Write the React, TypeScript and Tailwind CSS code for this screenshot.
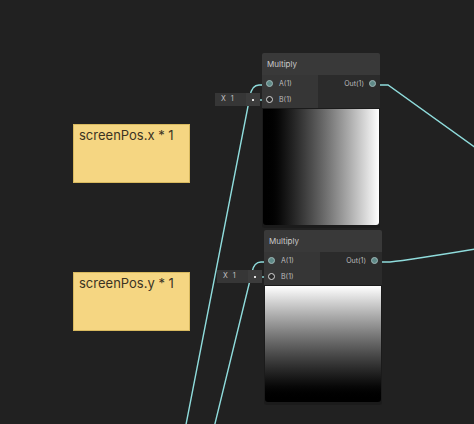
import React from 'react';

const font = { fontFamily: 'Inter, "Noto Sans", sans-serif' };

interface NodeProps {
    left: number;
    top: number;
    vertical?: boolean;
}

const Port: React.FC<{ filled?: boolean }> = ({ filled }) => (
    <span
        className={`w-[7px] h-[7px] rounded-full border ${filled ? 'border-[#9fb8b8] bg-[#5f8a88]' : 'border-[#d8d8d8] bg-[#2a2a2a]'}`}
    />
);

const MultiplyNode: React.FC<NodeProps> = ({ left, top, vertical }) => (
    <div className="absolute w-[118px] flex flex-col" style={{ left, top }}>
        <div className="h-[22px] bg-[#393939] flex items-center px-[5px] text-[8px] text-[#c9c9c9] rounded-t-[2px]">
            Multiply
        </div>
        <div className="h-[33px] flex">
            <div className="w-[56px] bg-[#363636] flex flex-col pt-[5px] gap-[9px] pl-[4px]">
                <div className="flex items-center gap-[6px] text-[7px] text-[#bdbdbd] leading-none">
                    <Port filled />
                    A(1)
                </div>
                <div className="flex items-center gap-[6px] text-[7px] text-[#bdbdbd] leading-none">
                    <Port />
                    B(1)
                </div>
            </div>
            <div className="flex-1 bg-[#2b2b2b] flex justify-end items-start pt-[5px] pr-[4px]">
                <div className="flex items-center gap-[5px] text-[7px] text-[#bdbdbd] leading-none">
                    Out(1)
                    <Port filled />
                </div>
            </div>
        </div>
        <div className="bg-[#1b1b1b] p-[1px] pb-[3px] rounded-b-[3px]">
            <div
                className={`h-[116px] rounded-b-[3px] ${vertical ? 'bg-gradient-to-b from-[#ffffff] to-[#000000]' : 'bg-gradient-to-r from-[#000000] to-[#ffffff]'}`}
            />
        </div>
    </div>
);

const InlineInput: React.FC<{ left: number; top: number }> = ({ left, top }) => (
    <div className="absolute h-[13px] flex items-center text-[7px] text-[#c4c4c4]" style={{ left, top }}>
        <div className="w-[31px] h-full bg-[#363636] flex items-center gap-[5px] pl-[6px]">
            <span>X</span>
            <span>1</span>
        </div>
        <div className="w-[14px] h-full bg-[#3c3c3c] flex items-center justify-center">
            <span className="w-[2px] h-[2px] bg-[#e0e0e0]" />
        </div>
    </div>
);

const StickyNote: React.FC<{ top: number; text: string }> = ({ top, text }) => (
    <div
        className="absolute left-[73px] w-[117px] h-[59px] bg-[#f5d682] border border-[#d8b95f] px-[5px] pt-[1px] text-[13px] text-[#3b3322]"
        style={{ top }}
    >
        {text}
    </div>
);

export default function App() {
    return (
        <div className="relative w-[474px] h-[424px] overflow-hidden bg-[#212121]" style={font}>
            <StickyNote top={124} text="screenPos.x * 1" />
            <StickyNote top={272} text="screenPos.y * 1" />

            <svg className="absolute inset-0" width="474" height="424" fill="none" stroke="#8fdcdc" strokeWidth="1.4">
                <path d="M183 440 L250 96 Q252 85 259 85 L268 85" />
                <path d="M211 440 L252 272 Q254 262 261 262 L270 262" />
                <path d="M256 100 L268 100" />
                <path d="M258 277 L270 277" />
                <path d="M376 85 L388 85 L476 148" />
                <path d="M378 262 L390 262 Q410 260 476 249" />
            </svg>

            <MultiplyNode left={262} top={53} />
            <MultiplyNode left={264} top={230} vertical />

            <InlineInput left={215} top={93} />
            <InlineInput left={217} top={270} />
        </div>
    );
}
